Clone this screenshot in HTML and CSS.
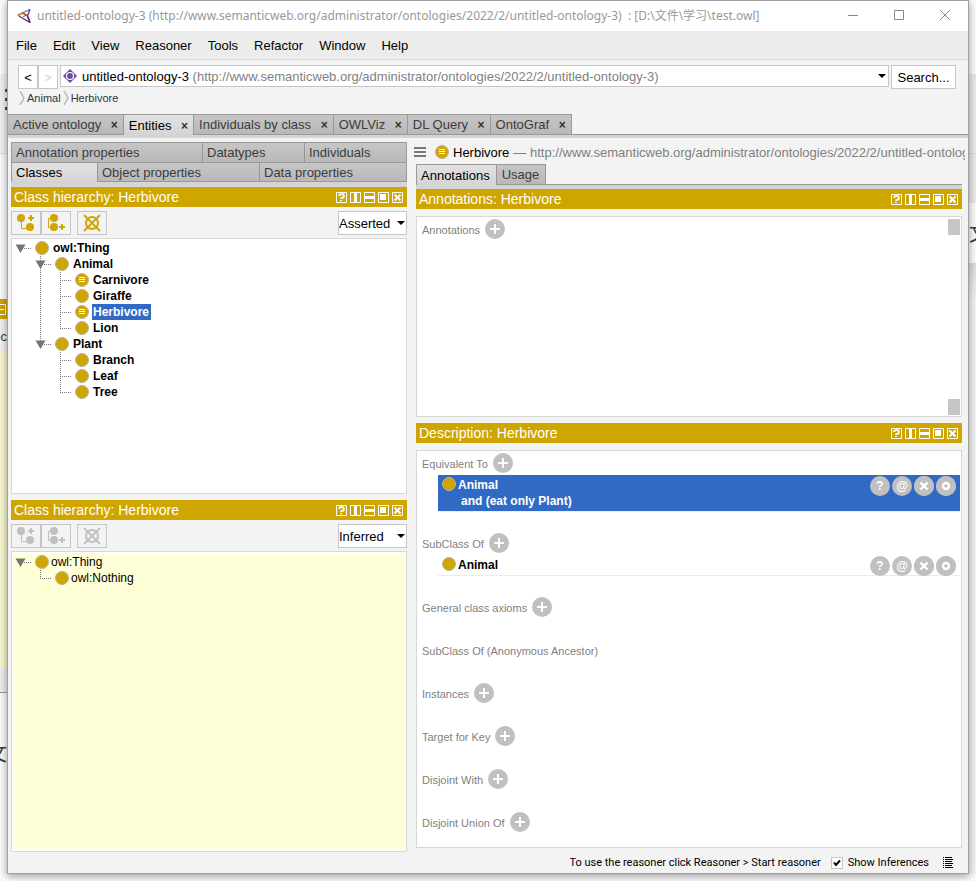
FILE: index.html
```
<!DOCTYPE html>
<html lang="en">
<head>
  <meta charset="UTF-8" />
  <meta name="viewport" content="width=device-width, initial-scale=1.0"/>
  <title>untitled-ontology-3</title>
  <link rel="stylesheet" href="styles.css">
</head>
<body>
  <!-- shared icons -->
  <svg class="sprite" aria-hidden="true">
    <symbol id="class" viewBox="0 0 14 14"><circle cx="7" cy="7" r="6.5" fill="#cfa500" stroke="#b9b3a0"/></symbol>
    <symbol id="defined" viewBox="0 0 14 14"><circle cx="7" cy="7" r="6.5" fill="#cfa500" stroke="#b9b3a0"/><path d="M4 4.5h6M4 6.5h6M4 8.5h6" stroke="#fff"/></symbol>
    <symbol id="open" viewBox="0 0 11 9"><path d="M0.5 0.5h10L5.5 9z" fill="#757575"/></symbol>
    <symbol id="plus" viewBox="0 0 20 20"><circle cx="10" cy="10" r="10" fill="#c0c0c0"/><path d="M10 5v10M5 10h10" stroke="#fff" stroke-width="2"/></symbol>
    <symbol id="del" viewBox="0 0 20 20"><circle cx="10" cy="10" r="10" fill="#c0c0c0"/><path d="M6.5 6.5l7 7M13.5 6.5l-7 7" stroke="#fff" stroke-width="2.4"/></symbol>
    <symbol id="edit" viewBox="0 0 20 20"><circle cx="10" cy="10" r="10" fill="#c0c0c0"/><circle cx="10" cy="10" r="3" fill="none" stroke="#fff" stroke-width="2.4"/></symbol>
    <symbol id="w-help" viewBox="0 0 11 11"><path d="M.5.5h10v10H.5z" fill="none" stroke="#fff"/><path d="M3 4V3h1V2h3v1h1v2H7v1H5v1" fill="none" stroke="#fff" stroke-width="1.3"/><path d="M4 8h2v1H4z" fill="#fff"/></symbol>
    <symbol id="w-vert" viewBox="0 0 11 11"><path d="M.5.5h10v10H.5z" fill="none" stroke="#fff"/><path d="M4 0h3v11H4z" fill="#fff"/></symbol>
    <symbol id="w-horz" viewBox="0 0 11 11"><path d="M.5.5h10v10H.5z" fill="none" stroke="#fff"/><path d="M0 4h11v3H0z" fill="#fff"/></symbol>
    <symbol id="w-float" viewBox="0 0 11 11"><path d="M.5.5h10v10H.5z" fill="none" stroke="#fff"/><path d="M2 2h6v6H2z" fill="#fff"/></symbol>
    <symbol id="w-close" viewBox="0 0 11 11"><path d="M.5.5h10v10H.5z" fill="none" stroke="#fff"/><path d="M2.5 2.5l6 6M8.5 2.5l-6 6" stroke="#fff" stroke-width="2"/></symbol>
    <symbol id="addsub" viewBox="0 0 20 20"><path d="M5.500 6v9.500H14" fill="none" stroke="currentColor"/><circle cx="5" cy="5" r="4" fill="currentColor"/><circle cx="14" cy="14" r="4" fill="currentColor"/><path d="M15 2v6M12 5h6" stroke="currentColor" stroke-width="2"/></symbol>
    <symbol id="addsib" viewBox="0 0 20 20"><path d="M8 5.500H2.500v9H8" fill="none" stroke="currentColor"/><circle cx="8" cy="5" r="4" fill="currentColor"/><circle cx="8" cy="14" r="4" fill="currentColor"/><path d="M16 11v6M13 14h6" stroke="currentColor" stroke-width="2"/></symbol>
    <symbol id="delcls" viewBox="0 0 20 20"><circle cx="10" cy="10" r="6" fill="none" stroke="currentColor" stroke-width="2"/><path d="M2 2l16 16M18 2L2 18" stroke="currentColor" stroke-width="1.8"/></symbol>
  </svg>

  <div class="desktop">
    <div class="behind left" aria-hidden="true">
      <div class="b-top"></div>
      <div class="b-menu"><i></i><i></i><i></i></div>
      <div class="b-page"></div>
      <div class="b-gold"><svg width="6" height="11"><path d="M0 .5h5.500v10H0M0 5.500h4" fill="none" stroke="#fff"/></svg></div>
      <div class="b-tools">ec</div>
      <div class="b-yellow"></div>
      <div class="b-foot"></div>
      <div class="b-text">文</div>
    </div>

    <div class="window">
      <header class="titlebar">
        <svg width="14" height="14" viewBox="0 0 14 14" fill="none">
          <path d="M4 4.500L13 .5" stroke="#3c7fa8" stroke-width="1.300"/>
          <path d="M.5 6.500L6 4l4 2.500" stroke="#c8743a" stroke-width="1.800"/>
          <path d="M13 .5L10.500 7l2.500 6" stroke="#7a3a8c" stroke-width="1.500"/>
          <path d="M2 7l4 2.500 7 4-3-7" stroke="#5b2d82" stroke-width="1.300"/>
          <path d="M6 4.500l3 1.500-3 2" stroke="#b0402e"/>
        </svg>
        <span class="title">untitled-ontology-3 (http://www.semanticweb.org/administrator/ontologies/2022/2/untitled-ontology-3)&nbsp; : [D:\文件\学习\test.owl]</span>
        <button aria-label="Minimize"><svg width="12" height="12"><path d="M1 5.500h10" stroke="#888"/></svg></button>
        <button aria-label="Maximize"><svg width="12" height="12"><path d="M1.500 .5h9v9h-9z" fill="none" stroke="#888"/></svg></button>
        <button aria-label="Close"><svg width="12" height="12"><path d="M1 0l10 10M11 0L1 10" stroke="#888"/></svg></button>
      </header>

      <nav class="menubar">
        <button>File</button>
        <button>Edit</button>
        <button>View</button>
        <button>Reasoner</button>
        <button>Tools</button>
        <button>Refactor</button>
        <button>Window</button>
        <button>Help</button>
      </nav>

      <div class="location">
        <button class="box nav" aria-label="Back">&lt;</button>
        <button class="box nav" aria-label="Forward" disabled>&gt;</button>
        <button class="box ontology" aria-haspopup="listbox">
          <svg width="14" height="14" viewBox="0 0 14 14"><path d="M7 0l7 7-7 7-7-7z" fill="#6b4a9e"/><circle cx="7" cy="7" r="3.5" fill="none" stroke="#fff" stroke-width="1.2"/></svg>
          <span>untitled-ontology-3 <span class="iri">(http://www.semanticweb.org/administrator/ontologies/2022/2/untitled-ontology-3)</span></span>
          <svg class="arrow" width="8" height="4"><path d="M0 0h8L4 4z"/></svg>
        </button>
        <button class="box search">Search...</button>
      </div>

      <div class="crumbs">
        <svg width="6" height="14"><path d="M1 0l4 7-4 7" fill="none" stroke="#b0b0b0" stroke-width="1.300"/></svg>
        <a href="#">Animal</a>
        <svg width="6" height="14"><path d="M1 0l4 7-4 7" fill="none" stroke="#b0b0b0" stroke-width="1.300"/></svg>
        <a href="#">Herbivore</a>
      </div>

      <div class="tabs main-tabs">
        <button class="tab">Active ontology <span class="x">×</span></button>
        <button class="tab active">Entities <span class="x">×</span></button>
        <button class="tab">Individuals by class <span class="x">×</span></button>
        <button class="tab">OWLViz <span class="x">×</span></button>
        <button class="tab">DL Query <span class="x">×</span></button>
        <button class="tab">OntoGraf <span class="x">×</span></button>
      </div>
      <div class="band"></div>

      <main class="workspace">
        <section class="col">
          <div class="tabgrid upper">
            <button class="tab">Annotation properties</button>
            <button class="tab">Datatypes</button>
            <button class="tab">Individuals</button>
          </div>
          <div class="tabgrid lower">
            <button class="tab active">Classes</button>
            <button class="tab">Object properties</button>
            <button class="tab">Data properties</button>
          </div>
          <div class="strip"></div>

          <div class="panel asserted">
            <div class="panel-head">
              <h2>Class hierarchy: Herbivore</h2>
              <button aria-label="Help"><svg><use href="#w-help"/></svg></button>
              <button aria-label="Split vertically"><svg><use href="#w-vert"/></svg></button>
              <button aria-label="Split horizontally"><svg><use href="#w-horz"/></svg></button>
              <button aria-label="Float"><svg><use href="#w-float"/></svg></button>
              <button aria-label="Close"><svg><use href="#w-close"/></svg></button>
            </div>
            <div class="tools">
              <button class="box" aria-label="Add subclass"><svg><use href="#addsub"/></svg></button>
              <button class="box" aria-label="Add sibling class"><svg><use href="#addsib"/></svg></button>
              <button class="box apart" aria-label="Delete class"><svg><use href="#delcls"/></svg></button>
              <select class="box" aria-label="Hierarchy"><option>Asserted</option><option>Inferred</option></select>
            </div>
            <div class="view tree">
              <ul>
                <li>
                  <div class="row"><span class="join"><svg><use href="#open"/></svg></span><svg class="dot"><use href="#class"/></svg><span class="label">owl:Thing</span></div>
                  <ul>
                    <li>
                      <div class="row"><span class="join"><svg><use href="#open"/></svg></span><svg class="dot"><use href="#class"/></svg><span class="label">Animal</span></div>
                      <ul>
                        <li><div class="row"><span class="join"></span><svg class="dot"><use href="#defined"/></svg><span class="label">Carnivore</span></div></li>
                        <li><div class="row"><span class="join"></span><svg class="dot"><use href="#class"/></svg><span class="label">Giraffe</span></div></li>
                        <li><div class="row"><span class="join"></span><svg class="dot"><use href="#defined"/></svg><span class="label selected">Herbivore</span></div></li>
                        <li><div class="row"><span class="join"></span><svg class="dot"><use href="#class"/></svg><span class="label">Lion</span></div></li>
                      </ul>
                    </li>
                    <li>
                      <div class="row"><span class="join"><svg><use href="#open"/></svg></span><svg class="dot"><use href="#class"/></svg><span class="label">Plant</span></div>
                      <ul>
                        <li><div class="row"><span class="join"></span><svg class="dot"><use href="#class"/></svg><span class="label">Branch</span></div></li>
                        <li><div class="row"><span class="join"></span><svg class="dot"><use href="#class"/></svg><span class="label">Leaf</span></div></li>
                        <li><div class="row"><span class="join"></span><svg class="dot"><use href="#class"/></svg><span class="label">Tree</span></div></li>
                      </ul>
                    </li>
                  </ul>
                </li>
              </ul>
            </div>
          </div>

          <div class="panel inferred">
            <div class="panel-head">
              <h2>Class hierarchy: Herbivore</h2>
              <button aria-label="Help"><svg><use href="#w-help"/></svg></button>
              <button aria-label="Split vertically"><svg><use href="#w-vert"/></svg></button>
              <button aria-label="Split horizontally"><svg><use href="#w-horz"/></svg></button>
              <button aria-label="Float"><svg><use href="#w-float"/></svg></button>
              <button aria-label="Close"><svg><use href="#w-close"/></svg></button>
            </div>
            <div class="tools">
              <button class="box" aria-label="Add subclass" disabled><svg><use href="#addsub"/></svg></button>
              <button class="box" aria-label="Add sibling class" disabled><svg><use href="#addsib"/></svg></button>
              <button class="box apart" aria-label="Delete class" disabled><svg><use href="#delcls"/></svg></button>
              <select class="box" aria-label="Hierarchy"><option>Inferred</option><option>Asserted</option></select>
            </div>
            <div class="view tree plain">
              <ul>
                <li>
                  <div class="row"><span class="join"><svg><use href="#open"/></svg></span><svg class="dot"><use href="#class"/></svg><span class="label">owl:Thing</span></div>
                  <ul>
                    <li><div class="row"><span class="join"></span><svg class="dot"><use href="#class"/></svg><span class="label">owl:Nothing</span></div></li>
                  </ul>
                </li>
              </ul>
            </div>
          </div>
        </section>

        <section class="col right-col">
          <div class="entity">
            <svg width="12" height="12"><path d="M0 2h12M0 6h12M0 10h12" stroke="#777" stroke-width="2"/></svg>
            <svg class="dot"><use href="#defined"/></svg>
            <span class="name">Herbivore</span>
            <span class="iri">— http://www.semanticweb.org/administrator/ontologies/2022/2/untitled-ontology-3#Herbivore</span>
          </div>
          <div class="tabs sub-tabs">
            <button class="tab active">Annotations</button>
            <button class="tab">Usage</button>
          </div>
          <div class="band"></div>

          <div class="panel annotations">
            <div class="panel-head">
              <h2>Annotations: Herbivore</h2>
              <button aria-label="Help"><svg><use href="#w-help"/></svg></button>
              <button aria-label="Split vertically"><svg><use href="#w-vert"/></svg></button>
              <button aria-label="Split horizontally"><svg><use href="#w-horz"/></svg></button>
              <button aria-label="Float"><svg><use href="#w-float"/></svg></button>
              <button aria-label="Close"><svg><use href="#w-close"/></svg></button>
            </div>
            <div class="view frame scroller">
              <div class="frame-head"><span>Annotations</span><button class="round" aria-label="Add annotation"><svg><use href="#plus"/></svg></button></div>
              <div class="scrollbar"><i></i><i></i></div>
            </div>
          </div>

          <div class="panel description">
            <div class="panel-head">
              <h2>Description: Herbivore</h2>
              <button aria-label="Help"><svg><use href="#w-help"/></svg></button>
              <button aria-label="Split vertically"><svg><use href="#w-vert"/></svg></button>
              <button aria-label="Split horizontally"><svg><use href="#w-horz"/></svg></button>
              <button aria-label="Float"><svg><use href="#w-float"/></svg></button>
              <button aria-label="Close"><svg><use href="#w-close"/></svg></button>
            </div>
            <div class="view frame">
              <div class="group">
                <div class="frame-head"><span>Equivalent To</span><button class="round" aria-label="Add"><svg><use href="#plus"/></svg></button></div>
                <div class="axiom selected">
                  <svg class="dot"><use href="#class"/></svg>
                  <div class="expr">Animal<div class="and">and (eat only Plant)</div></div>
                  <div class="actions">
                    <button class="round">?</button>
                    <button class="round">@</button>
                    <button class="round" aria-label="Delete"><svg><use href="#del"/></svg></button>
                    <button class="round" aria-label="Edit"><svg><use href="#edit"/></svg></button>
                  </div>
                </div>
              </div>
              <div class="group">
                <div class="frame-head"><span>SubClass Of</span><button class="round" aria-label="Add"><svg><use href="#plus"/></svg></button></div>
                <div class="axiom">
                  <svg class="dot"><use href="#class"/></svg>
                  <div class="expr">Animal</div>
                  <div class="actions">
                    <button class="round">?</button>
                    <button class="round">@</button>
                    <button class="round" aria-label="Delete"><svg><use href="#del"/></svg></button>
                    <button class="round" aria-label="Edit"><svg><use href="#edit"/></svg></button>
                  </div>
                </div>
              </div>
              <div class="group"><div class="frame-head"><span>General class axioms</span><button class="round" aria-label="Add"><svg><use href="#plus"/></svg></button></div></div>
              <div class="group"><div class="frame-head"><span>SubClass Of (Anonymous Ancestor)</span></div></div>
              <div class="group"><div class="frame-head"><span>Instances</span><button class="round" aria-label="Add"><svg><use href="#plus"/></svg></button></div></div>
              <div class="group"><div class="frame-head"><span>Target for Key</span><button class="round" aria-label="Add"><svg><use href="#plus"/></svg></button></div></div>
              <div class="group"><div class="frame-head"><span>Disjoint With</span><button class="round" aria-label="Add"><svg><use href="#plus"/></svg></button></div></div>
              <div class="group"><div class="frame-head"><span>Disjoint Union Of</span><button class="round" aria-label="Add"><svg><use href="#plus"/></svg></button></div></div>
            </div>
          </div>
        </section>
      </main>

      <footer class="status">
        <span>To use the reasoner click Reasoner &gt; Start reasoner</span>
        <label><input type="checkbox" checked> Show Inferences</label>
        <button aria-label="Log"><svg width="11" height="11" shape-rendering="crispEdges"><path d="M0 .5h1M0 2.500h1M0 4.500h1M0 6.500h1M0 8.500h1M0 10.500h1M2 .5h7M2 2.500h8M2 4.500h7M2 6.500h8M2 8.500h7M2 10.500h8" stroke="#000"/></svg></button>
      </footer>
    </div>

    <div class="behind right" aria-hidden="true">
      <div class="b-top"></div>
      <div class="b-menu"></div>
      <div class="b-gray"></div>
      <div class="b-text">文</div>
      <div class="b-rest"></div>
    </div>
  </div>
</body>
</html>
```
FILE: styles.css
```
* {
  box-sizing: border-box;
}
body {
  margin: 0;
  background: #fafafa;
  color: #000;
  font-family: "Liberation Sans", Arial, sans-serif;
  font-size: 13px;
}
button, select, input {
  margin: 0;
  padding: 0;
  border: 0;
  background: none;
  color: inherit;
  font: inherit;
}
svg {
  display: block;
  flex: none;
}
ul {
  list-style: none;
  margin: 0;
  padding: 0;
}
h2 {
  margin: 0;
  flex: 1;
  font-size: 14px;
  font-weight: normal;
}
.sprite {
  display: none;
}

/* desktop and the windows behind */
.desktop {
  display: grid;
  grid-template-columns: 7px 1fr 7px;
  height: 100vh;
  padding-bottom: 7px;
  overflow: hidden;
}
.behind {
  display: flex;
  flex-direction: column;
  overflow: hidden;
  color: #333a48;
}
.b-top {
  height: 74px;
  background: #fcfcfc;
}
.left .b-menu {
  height: 80px;
  padding: 15px 0 0 5px;
  background: #f0f0f0;
  border-bottom: 1px solid #ddd;
}
.b-menu i {
  display: block;
  width: 3px;
  height: 3px;
  margin-bottom: 6px;
  background: #445;
}
.b-page {
  height: 145px;
  background: #fafafa;
}
.b-gold {
  height: 20px;
  padding-top: 5px;
  background: #cfa500;
}
.b-tools {
  height: 33px;
  padding-top: 10px;
  background: #f0f0f0;
  font-size: 13px;
  line-height: 16px;
}
.left .b-tools {
  display: flex;
  justify-content: flex-end;
}
.b-yellow {
  height: 316px;
  background: #f6f6cf;
}
.b-foot {
  height: 25px;
  background: #ececec;
  border-bottom: 1px solid #999;
}
.b-text {
  font-family: "Noto Sans CJK SC", sans-serif;
  font-size: 20px;
  line-height: 60px;
}
.left .b-text {
  display: flex;
  justify-content: flex-end;
  flex: 1;
  padding-top: 30px;
  background: #fafafa;
}
.right .b-menu {
  height: 80px;
  background: #eaeaea;
  border-bottom: 1px solid #d8d8d8;
}
.b-gray {
  height: 49px;
  background: #eaeaea;
}
.right .b-text {
  height: 60px;
  background: #fcfcfc;
}
.b-rest {
  flex: 1;
  background: linear-gradient(#dedede, #f4f4f4 40px);
}

/* window */
.window {
  display: flex;
  flex-direction: column;
  min-width: 0;
  min-height: 0;
  position: relative;
  background: #f3f3f3;
  border: 1px solid #a0a0a0;
  box-shadow: 0 2px 8px rgba(0, 0, 0, 0.4);
}
.titlebar {
  display: flex;
  align-items: center;
  height: 30px;
  padding-left: 9px;
  background: #fff;
  color: #999;
}
.title {
  flex: 1;
  padding-left: 6px;
  font-family: "Noto Sans", "Noto Sans CJK SC", sans-serif;
  font-size: 12px;
  line-height: 16px;
  white-space: nowrap;
}
.titlebar button {
  display: flex;
  justify-content: center;
  width: 46px;
}
.menubar {
  display: flex;
  gap: 16px;
  height: 29px;
  padding: 0 8px;
  background: #ececec;
  border-bottom: 1px solid #d9d9d9;
}
.location {
  display: flex;
  align-items: flex-start;
  height: 29px;
  padding: 5px 12px 0 10px;
}
.box {
  height: 24px;
  background: #fff;
  border: 1px solid #c6c6c6;
}
.nav {
  width: 20px;
}
.nav:disabled {
  color: #d0d0d0;
}
.ontology {
  display: flex;
  align-items: center;
  flex: 1;
  gap: 5px;
  height: 22px;
  margin: 0 2px;
  padding: 0 2px;
  text-align: left;
  white-space: nowrap;
}
.iri {
  color: #7f7f7f;
}
.arrow {
  margin-left: auto;
}
.search {
  width: 65px;
}
.crumbs {
  display: flex;
  align-items: center;
  gap: 2px;
  height: 18px;
  padding-left: 11px;
  font-size: 11px;
}
.crumbs a {
  color: #333;
  text-decoration: none;
}

/* tabs */
.tabs {
  display: flex;
}
.tab {
  padding: 0 5px;
  height: 20px;
  background: linear-gradient(#c6c6c6, #b8b8b8);
  border: 1px solid #989898;
  border-width: 1px 1px 0 0;
  color: #3c3c3c;
  text-align: left;
  white-space: nowrap;
}
.tab.active {
  background: linear-gradient(#e2e2e2, #d4d4d4);
  color: #000;
}
.tabs .tab.active {
  position: relative;
  height: 21px;
  margin-bottom: -1px;
}
.main-tabs {
  margin-top: 7px;
}
.main-tabs .x {
  padding-left: 6px;
  font-weight: bold;
  font-size: 12px;
  color: #333;
}
.band {
  height: 4px;
  background: #d4d4d4;
  border-top: 1px solid #989898;
}
.tabgrid {
  display: grid;
  border-left: 1px solid #989898;
}
.tabgrid .tab {
  padding: 0 4px;
}
.upper {
  grid-template-columns: 191fr 102fr 102fr;
}
.lower {
  grid-template-columns: 86fr 162fr 147fr;
}
.lower .tab:not(.active) {
  border-bottom-width: 1px;
}
.strip {
  height: 5px;
  background: #d4d4d4;
}
.sub-tabs {
  margin-top: 2px;
}
.sub-tabs .tab {
  padding: 0 6px 0 5px;
}
.sub-tabs .tab:first-child {
  padding-left: 4px;
  border-left-width: 1px;
}

/* workspace */
.workspace {
  flex: 1;
  display: grid;
  grid-template-columns: 396fr 546fr;
  gap: 9px;
  min-height: 0;
  padding: 4px 6px 0 3px;
}
.col {
  display: flex;
  flex-direction: column;
  min-width: 0;
  min-height: 0;
}
.right-col {
  padding-bottom: 4px;
}
.right-col .band {
  height: 5px;
}
.entity {
  display: flex;
  align-items: center;
  height: 20px;
  margin: 0 -3px 0 -2px;
  overflow: hidden;
  white-space: nowrap;
}
.entity .dot {
  margin: 0 4px 0 9px;
}
.entity .name {
  padding-right: 4px;
}
.panel {
  display: flex;
  flex-direction: column;
  flex: 1 1 0;
  min-height: 0;
}
.panel + .panel {
  margin-top: 6px;
}
.asserted { flex-grow: 307; }
.inferred { flex-grow: 352; }
.annotations { flex-grow: 228; }
.description { flex-grow: 425; }
.panel-head {
  display: flex;
  align-items: center;
  gap: 3px;
  height: 20px;
  padding: 0 4px 0 3px;
  background: #cfa500;
  color: #fff;
}
.panel-head svg {
  width: 11px;
  height: 11px;
}
.tools {
  display: flex;
  padding: 4px 0 3px;
}
.tools button {
  display: flex;
  align-items: center;
  justify-content: center;
  width: 30px;
  background: #f3f3f3;
  color: #cfa500;
}
.tools button:disabled {
  color: #c0c0c0;
}
.tools svg {
  width: 20px;
  height: 20px;
}
.tools .apart {
  margin-left: 6px;
}
.tools select {
  appearance: none;
  width: 69px;
  margin-left: auto;
  background: #fff url("data:image/svg+xml,%3Csvg xmlns='http://www.w3.org/2000/svg' width='8' height='4'%3E%3Cpath d='M0 0h8L4 4z'/%3E%3C/svg%3E") no-repeat right 1px center;
}
.view {
  flex: 1;
  min-height: 0;
  background: #fff;
  border: 1px solid #d8d8d8;
  overflow: hidden;
}

/* class tree */
.tree {
  padding: 1px 3px;
  font-size: 12px;
  font-weight: bold;
}
.tree ul ul {
  margin-left: 20px;
}
.tree ul ul > li {
  background: repeating-linear-gradient(#777 0 1px, transparent 1px 2px) 5px 0 / 1px 100% no-repeat;
}
.tree ul ul > li:last-child {
  background-size: 1px 8px;
}
.row {
  display: flex;
  align-items: center;
  height: 16px;
}
.join {
  width: 17px;
  height: 9px;
  margin-right: 3px;
  background: repeating-linear-gradient(90deg, #777 0 1px, transparent 1px 2px) 5px 4px / 12px 1px no-repeat;
}
.join svg {
  width: 11px;
  height: 9px;
}
.dot {
  width: 14px;
  height: 14px;
}
.label {
  margin-left: 3px;
  padding: 0 2px 0 1px;
  line-height: 16px;
}
.label.selected {
  background: #316ac5;
  color: #fff;
}
.plain {
  padding-top: 2px;
  background: #ffffd7;
  box-shadow: inset 0 0 0 1px #fff;
  font-weight: normal;
}
.plain .label {
  margin-left: 1px;
}

/* frames */
.frame {
  margin-top: 7px;
  padding: 2px 1px 0 5px;
}
.frame-head {
  display: flex;
  align-items: center;
  gap: 5px;
  height: 20px;
  color: #7f7f7f;
  font-size: 11px;
}
.frame-head span {
  padding-top: 2px;
}
.round, .round svg {
  width: 20px;
  height: 20px;
}
.scroller {
  display: flex;
  justify-content: space-between;
  padding: 2px 1px 1px 5px;
}
.scrollbar {
  display: flex;
  flex-direction: column;
  justify-content: space-between;
}
.scrollbar i {
  width: 12px;
  height: 16px;
  background: #c6c6c6;
}
.group {
  margin-bottom: 21px;
  padding-bottom: 2px;
}
.group:has(.axiom) {
  padding-bottom: 0;
}
.axiom {
  display: flex;
  align-items: flex-start;
  margin: 2px 0 0 16px;
  padding: 2px 4px;
  border-bottom: 1px solid #ececec;
  font-size: 12px;
  font-weight: bold;
  line-height: 16px;
}
.axiom.selected {
  background: #316ac5;
  color: #fff;
}
.expr {
  flex: 1;
  padding-left: 2px;
}
.and {
  padding-left: 3px;
}
.actions {
  display: flex;
  gap: 2px;
  margin: -1px 0 -3px;
}
.actions .round {
  border-radius: 50%;
  background: #c0c0c0;
  color: #fff;
  line-height: 20px;
  text-align: center;
}

/* status bar */
.status {
  display: flex;
  align-items: center;
  justify-content: flex-end;
  height: 21px;
  padding-right: 14px;
  font-family: Roboto, sans-serif;
  font-size: 11px;
}
.status label {
  display: flex;
  align-items: center;
  gap: 5px;
  margin: 0 14px 0 10px;
}
.status input {
  appearance: none;
  width: 12px;
  height: 12px;
  background: #fff url("data:image/svg+xml,%3Csvg xmlns='http://www.w3.org/2000/svg' width='8' height='8'%3E%3Cpath d='M1 3.5l2 2.5L7 1.5' fill='none' stroke='%23000' stroke-width='2'/%3E%3C/svg%3E") no-repeat center;
  border: 1px solid #c6c6c6;
}
```
